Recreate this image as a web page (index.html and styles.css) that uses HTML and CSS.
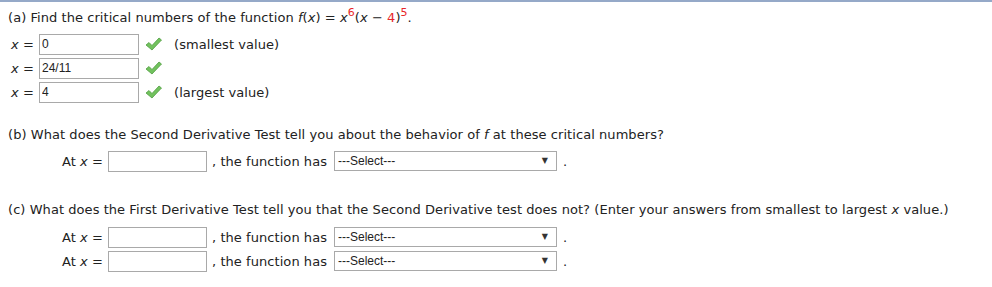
FILE: index.html
```html
<!DOCTYPE html>
<html lang="en">
<head>
    <meta charset="UTF-8">
    <title>Critical Numbers</title>
    <link rel="stylesheet" href="styles.css">
</head>
<body>
    <div class="question">
        <div class="part part-a">
            <p class="prompt">(a) Find the critical numbers of the function <i>f</i>(<i>x</i>) = <i>x</i><sup class="red">6</sup>(<i>x</i> &minus; <span class="red">4</span>)<sup class="red">5</sup>.</p>
            <div class="answer-row">
                <span class="label"><i>x</i> =</span>
                <input class="answer" type="text" value="0">
                <svg class="check" width="17" height="14" viewBox="0 0 17 14"><path d="M1 8 L4 5.5 L7 8.5 L14 1 L16.5 3 L7 13 Z" fill="#72c25e" stroke="#4f9d40" stroke-width="0.8" stroke-linejoin="round"/></svg>
                <span class="note">(smallest value)</span>
            </div>
            <div class="answer-row">
                <span class="label"><i>x</i> =</span>
                <input class="answer" type="text" value="24/11">
                <svg class="check" width="17" height="14" viewBox="0 0 17 14"><path d="M1 8 L4 5.5 L7 8.5 L14 1 L16.5 3 L7 13 Z" fill="#72c25e" stroke="#4f9d40" stroke-width="0.8" stroke-linejoin="round"/></svg>
            </div>
            <div class="answer-row">
                <span class="label"><i>x</i> =</span>
                <input class="answer" type="text" value="4">
                <svg class="check" width="17" height="14" viewBox="0 0 17 14"><path d="M1 8 L4 5.5 L7 8.5 L14 1 L16.5 3 L7 13 Z" fill="#72c25e" stroke="#4f9d40" stroke-width="0.8" stroke-linejoin="round"/></svg>
                <span class="note">(largest value)</span>
            </div>
        </div>

        <div class="part part-b">
            <p class="prompt">(b) What does the Second Derivative Test tell you about the behavior of <i>f</i> at these critical numbers?</p>
            <div class="test-row">
                <span>At <i>x</i> =</span>
                <input class="point" type="text">
                <span>, the function has</span>
                <span class="select-wrap">
                    <select class="choice"><option>---Select---</option></select>
                    <span class="arrow">&#9660;</span>
                </span>
                <span class="dot">.</span>
            </div>
        </div>

        <div class="part part-c">
            <p class="prompt">(c) What does the First Derivative Test tell you that the Second Derivative test does not? (Enter your answers from smallest to largest <i>x</i> value.)</p>
            <div class="test-row">
                <span>At <i>x</i> =</span>
                <input class="point" type="text">
                <span>, the function has</span>
                <span class="select-wrap">
                    <select class="choice"><option>---Select---</option></select>
                    <span class="arrow">&#9660;</span>
                </span>
                <span class="dot">.</span>
            </div>
            <div class="test-row">
                <span>At <i>x</i> =</span>
                <input class="point" type="text">
                <span>, the function has</span>
                <span class="select-wrap">
                    <select class="choice"><option>---Select---</option></select>
                    <span class="arrow">&#9660;</span>
                </span>
                <span class="dot">.</span>
            </div>
        </div>
    </div>
</body>
</html>
```

FILE: styles.css
```css
body {
    margin: 0;
    font-family: "DejaVu Sans", Verdana, sans-serif;
    font-size: 13px;
    letter-spacing: 0.06px;
    color: #222;
    background-color: #ffffff;
}

.question {
    border-top: 2px solid #95a9c8;
    padding: 7px 8px 0 8px;
}

.prompt {
    margin: 0;
    line-height: 18px;
    white-space: nowrap;
}

sup {
    font-size: 11px;
    line-height: 0;
    vertical-align: 6px;
}

.red {
    color: #e8262a;
}

.part-a .prompt {
    margin-bottom: 5px;
}

.answer-row {
    display: flex;
    align-items: center;
    height: 24px;
}

.label {
    width: 28px;
    padding-left: 3px;
}

input {
    box-sizing: border-box;
    height: 21px;
    border: 1px solid #a9a9a9;
    padding: 1px 2px;
    font-family: "Liberation Sans", Arial, sans-serif;
    font-size: 12px;
    letter-spacing: 0;
    color: #222;
    margin: 0;
}

.answer {
    width: 100px;
}

.check {
    margin-left: 6px;
    margin-right: 12px;
}

.part-b {
    margin-top: 22px;
}

.part-c {
    margin-top: 28px;
}

.part-b .prompt {
    margin-bottom: 5px;
}

.part-c .prompt {
    margin-bottom: 6px;
}

.test-row {
    display: flex;
    align-items: center;
    height: 24px;
    padding-left: 54px;
    white-space: nowrap;
}

.point {
    width: 99px;
    margin-left: 5px;
    margin-right: 5px;
}

.select-wrap {
    position: relative;
    margin-left: 7px;
}

.choice {
    box-sizing: border-box;
    width: 223px;
    height: 20px;
    border: 1px solid #a9a9a9;
    border-radius: 0;
    background-color: #ffffff;
    font-family: "Liberation Sans", Arial, sans-serif;
    font-size: 12px;
    letter-spacing: 0;
    color: #222;
    padding: 0 3px;
    appearance: none;
    -webkit-appearance: none;
    display: block;
}

.arrow {
    position: absolute;
    right: 9px;
    top: 5px;
    font-size: 8px;
    color: #333;
    pointer-events: none;
}

.dot {
    margin-left: 6px;
}
```
